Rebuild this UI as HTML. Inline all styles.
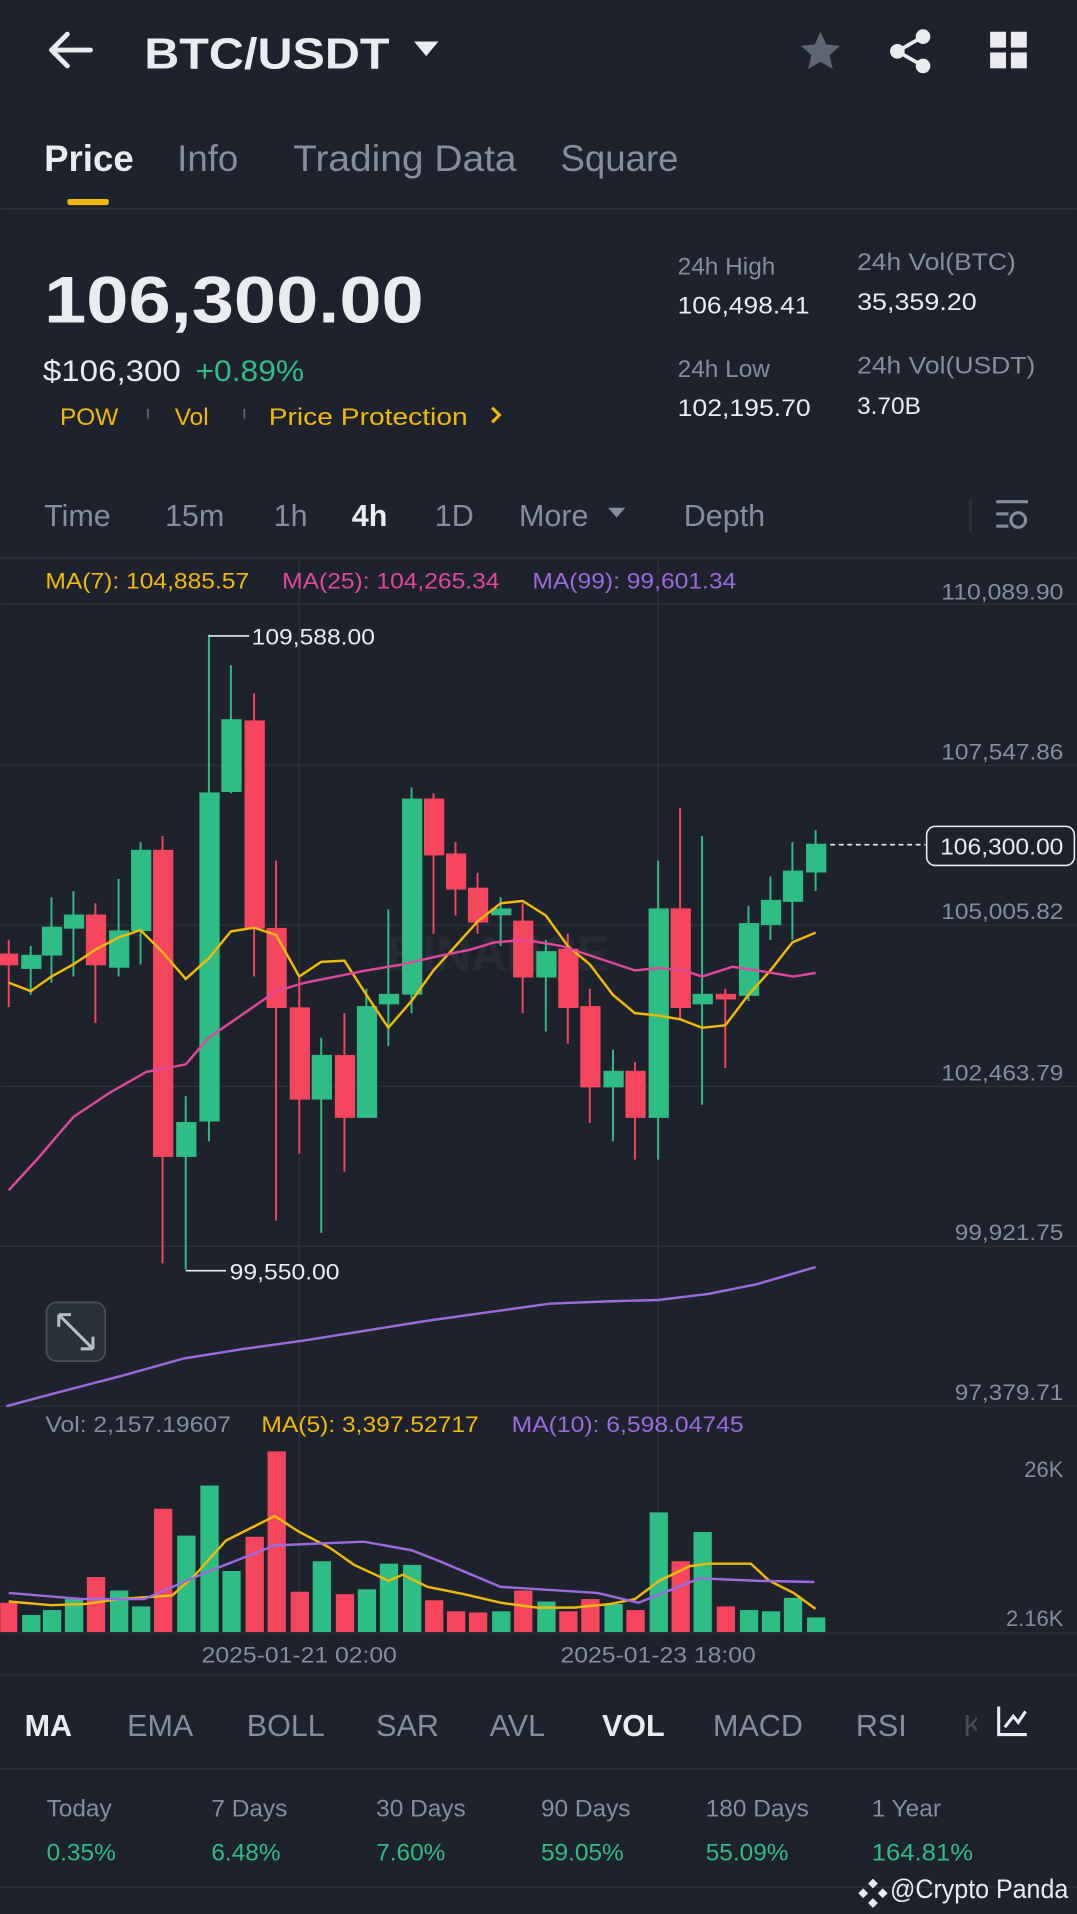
<!DOCTYPE html>
<html><head><meta charset="utf-8"><style>
html,body{margin:0;padding:0;background:#1e222d;}
svg{display:block;}
text{font-family:"Liberation Sans",sans-serif;}
</style></head><body>
<svg width="1077" height="1914" viewBox="0 0 882 1568" xmlns="http://www.w3.org/2000/svg">
<rect width="882" height="1568" fill="#1e222d"/>
<!-- header -->
<path d="M42 41 H74 M42 41 L55 28 M42 41 L55 54" stroke="#eaecef" stroke-width="4" fill="none" stroke-linecap="round" stroke-linejoin="round"/>
<text x="118" y="56" font-size="36" font-weight="bold" fill="#eaecef" textLength="201" lengthAdjust="spacingAndGlyphs">BTC/USDT</text>
<path d="M339 34 H359 L349 46 Z" fill="#eaecef"/>
<path d="M672 26 L676.7 36.5 L688 37.6 L679.5 45.2 L682 56.5 L672 50.6 L662 56.5 L664.5 45.2 L656 37.6 L667.3 36.5 Z" fill="#5e6673"/>
<g fill="#eaecef"><circle cx="756" cy="30" r="6"/><circle cx="735" cy="42" r="6"/><circle cx="756" cy="54" r="6"/></g>
<path d="M756 30 L735 42 L756 54" stroke="#eaecef" stroke-width="3" fill="none"/>
<g fill="#eaecef"><rect x="811" y="26" width="13" height="13"/><rect x="828" y="26" width="13" height="13"/><rect x="811" y="43" width="13" height="13"/><rect x="828" y="43" width="13" height="13"/></g>
<!-- tabs -->
<text x="36" y="140" font-size="30" fill="#eaecef" font-weight="bold">Price</text>
<text x="145" y="140" font-size="30" fill="#848e9c">Info</text>
<text x="240" y="140" font-size="30" fill="#848e9c" textLength="183" lengthAdjust="spacingAndGlyphs">Trading Data</text>
<text x="459" y="140" font-size="30" fill="#848e9c">Square</text>
<rect x="55" y="163" width="34" height="5" rx="2" fill="#f0b90b"/>
<line x1="0" y1="171" x2="882" y2="171" stroke="#2b3139" stroke-width="1.5"/>
<!-- price -->
<text x="36" y="264" font-size="54" font-weight="bold" fill="#eaecef" textLength="311" lengthAdjust="spacingAndGlyphs">106,300.00</text>
<text x="35" y="312" font-size="24" fill="#eaecef" textLength="113" lengthAdjust="spacingAndGlyphs">$106,300</text>
<text x="160" y="312" font-size="24" fill="#2ebd85" textLength="89" lengthAdjust="spacingAndGlyphs">+0.89%</text>
<text x="49" y="348" font-size="20" fill="#f0b90b">POW</text>
<line x1="121" y1="335" x2="121" y2="343" stroke="#5e6673" stroke-width="1.5"/>
<text x="143" y="348" font-size="20" fill="#f0b90b">Vol</text>
<line x1="200" y1="335" x2="200" y2="343" stroke="#5e6673" stroke-width="1.5"/>
<text x="220" y="348" font-size="20" fill="#f0b90b" textLength="163" lengthAdjust="spacingAndGlyphs">Price Protection</text>
<path d="M403 334 L409 340 L403 346" stroke="#f0b90b" stroke-width="2.5" fill="none"/>
<text x="555" y="225" font-size="20" fill="#848e9c">24h High</text>
<text x="555" y="257" font-size="20" fill="#eaecef" textLength="108" lengthAdjust="spacingAndGlyphs">106,498.41</text>
<text x="555" y="309" font-size="20" fill="#848e9c">24h Low</text>
<text x="555" y="341" font-size="20" fill="#eaecef" textLength="109" lengthAdjust="spacingAndGlyphs">102,195.70</text>
<text x="702" y="221" font-size="20" fill="#848e9c" textLength="130" lengthAdjust="spacingAndGlyphs">24h Vol(BTC)</text>
<text x="702" y="254" font-size="20" fill="#eaecef" textLength="98" lengthAdjust="spacingAndGlyphs">35,359.20</text>
<text x="702" y="306" font-size="20" fill="#848e9c" textLength="146" lengthAdjust="spacingAndGlyphs">24h Vol(USDT)</text>
<text x="702" y="339" font-size="20" fill="#eaecef">3.70B</text>
<!-- intervals -->
<g font-size="25" fill="#848e9c">
<text x="36" y="431">Time</text><text x="135" y="431">15m</text><text x="224" y="431">1h</text>
<text x="288" y="431" fill="#eaecef" font-weight="bold">4h</text>
<text x="356" y="431">1D</text><text x="425" y="431">More</text><text x="560" y="431">Depth</text></g>
<path d="M498 416 H512 L505 424 Z" fill="#848e9c"/>
<line x1="795" y1="408" x2="795" y2="436" stroke="#2b3139" stroke-width="2"/>
<g stroke="#848e9c" stroke-width="2.5" fill="none"><line x1="816" y1="411" x2="842" y2="411"/><line x1="816" y1="421" x2="826" y2="421"/><line x1="816" y1="431" x2="826" y2="431"/><circle cx="834" cy="426" r="6"/></g>
<line x1="0" y1="457" x2="882" y2="457" stroke="#2b3139" stroke-width="1.5"/>
<!-- grid -->
<g stroke="#2b3139" stroke-width="1.2">
<line x1="0" y1="495" x2="882" y2="495"/><line x1="0" y1="627" x2="882" y2="627"/><line x1="0" y1="758" x2="882" y2="758"/><line x1="0" y1="890" x2="882" y2="890"/><line x1="0" y1="1021" x2="882" y2="1021"/><line x1="0" y1="1152" x2="882" y2="1152"/>
<line x1="245" y1="457" x2="245" y2="1337"/><line x1="539" y1="457" x2="539" y2="1337"/>
<line x1="0" y1="1338" x2="882" y2="1338"/><line x1="0" y1="1372" x2="882" y2="1372"/><line x1="0" y1="1449" x2="882" y2="1449"/><line x1="0" y1="1546" x2="882" y2="1546"/>
</g>
<g font-size="18">
<text x="37" y="482" fill="#f0b90b" textLength="167" lengthAdjust="spacingAndGlyphs">MA(7): 104,885.57</text>
<text x="231" y="482" fill="#e0489e" textLength="178" lengthAdjust="spacingAndGlyphs">MA(25): 104,265.34</text>
<text x="436" y="482" fill="#9c6ade" textLength="167" lengthAdjust="spacingAndGlyphs">MA(99): 99,601.34</text></g>
<g font-size="18" fill="#848e9c" lengthAdjust="spacingAndGlyphs">
<text x="771" y="491" textLength="100" lengthAdjust="spacingAndGlyphs">110,089.90</text><text x="771" y="622" textLength="100" lengthAdjust="spacingAndGlyphs">107,547.86</text><text x="771" y="753" textLength="100" lengthAdjust="spacingAndGlyphs">105,005.82</text><text x="771" y="885" textLength="100" lengthAdjust="spacingAndGlyphs">102,463.79</text><text x="782" y="1016" textLength="89" lengthAdjust="spacingAndGlyphs">99,921.75</text><text x="782" y="1147" textLength="89" lengthAdjust="spacingAndGlyphs">97,379.71</text></g>
<text x="408" y="795" font-size="40" font-weight="bold" fill="#262b35" text-anchor="middle">BINANCE</text>
<!-- candles -->
<g stroke-width="1.6">
<g stroke="#f6465d" fill="#f6465d">
<line x1="7" y1="770" x2="7" y2="825"/><rect x="0" y="782" width="14" height="8"/>
<line x1="78" y1="740" x2="78" y2="838"/><rect x="71" y="750" width="15" height="40"/>
<line x1="133" y1="685" x2="133" y2="1035"/><rect x="126" y="697" width="15" height="250"/>
<line x1="208" y1="568" x2="208" y2="800"/><rect x="201" y="591" width="15" height="169"/>
<line x1="226" y1="705" x2="226" y2="1000"/><rect x="219" y="761" width="15" height="64"/>
<line x1="245" y1="800" x2="245" y2="945"/><rect x="238" y="826" width="15" height="74"/>
<line x1="282" y1="830" x2="282" y2="960"/><rect x="275" y="865" width="15" height="50"/>
<line x1="355" y1="650" x2="355" y2="765"/><rect x="348" y="655" width="15" height="45"/>
<line x1="373" y1="690" x2="373" y2="750"/><rect x="366" y="700" width="15" height="28"/>
<line x1="391" y1="715" x2="391" y2="765"/><rect x="384" y="728" width="15" height="27"/>
<line x1="428" y1="740" x2="428" y2="830"/><rect x="421" y="755" width="15" height="45"/>
<line x1="465" y1="765" x2="465" y2="855"/><rect x="458" y="778" width="15" height="47"/>
<line x1="483" y1="810" x2="483" y2="920"/><rect x="476" y="825" width="15" height="65"/>
<line x1="520" y1="870" x2="520" y2="950"/><rect x="513" y="878" width="15" height="37"/>
<line x1="557" y1="662" x2="557" y2="835"/><rect x="550" y="745" width="15" height="80"/>
<line x1="594" y1="810" x2="594" y2="875"/><rect x="587" y="815" width="15" height="3"/>
</g>
<g stroke="#2ebd85" fill="#2ebd85">
<line x1="25" y1="775" x2="25" y2="815"/><rect x="18" y="783" width="15" height="10"/>
<line x1="42" y1="735" x2="42" y2="805"/><rect x="35" y="760" width="15" height="22"/>
<line x1="60" y1="730" x2="60" y2="800"/><rect x="53" y="750" width="15" height="10"/>
<line x1="97" y1="720" x2="97" y2="800"/><rect x="90" y="763" width="15" height="29"/>
<line x1="115" y1="690" x2="115" y2="790"/><rect x="108" y="697" width="15" height="65"/>
<line x1="152" y1="898" x2="152" y2="1040"/><rect x="145" y="920" width="15" height="27"/>
<line x1="171" y1="520" x2="171" y2="935"/><rect x="164" y="650" width="15" height="268"/>
<line x1="189" y1="545" x2="189" y2="650"/><rect x="182" y="590" width="15" height="58"/>
<line x1="263" y1="850" x2="263" y2="1010"/><rect x="256" y="865" width="15" height="35"/>
<line x1="300" y1="810" x2="300" y2="905"/><rect x="293" y="825" width="15" height="90"/>
<line x1="318" y1="745" x2="318" y2="857"/><rect x="311" y="815" width="15" height="7"/>
<line x1="337" y1="645" x2="337" y2="830"/><rect x="330" y="655" width="15" height="159"/>
<line x1="410" y1="735" x2="410" y2="775"/><rect x="403" y="745" width="15" height="4"/>
<line x1="447" y1="770" x2="447" y2="845"/><rect x="440" y="780" width="15" height="20"/>
<line x1="502" y1="860" x2="502" y2="935"/><rect x="495" y="878" width="15" height="12"/>
<line x1="539" y1="705" x2="539" y2="950"/><rect x="532" y="745" width="15" height="170"/>
<line x1="575" y1="685" x2="575" y2="905"/><rect x="568" y="815" width="15" height="7"/>
<line x1="613" y1="742" x2="613" y2="820"/><rect x="606" y="757" width="15" height="58"/>
<line x1="631" y1="718" x2="631" y2="770"/><rect x="624" y="738" width="15" height="19"/>
<line x1="649" y1="690" x2="649" y2="770"/><rect x="642" y="714" width="15" height="24"/>
<line x1="668" y1="680" x2="668" y2="730"/><rect x="661" y="692" width="15" height="22"/>
</g></g>
<!-- MA lines -->
<g fill="none" stroke-width="2">
<polyline stroke="#f0b90b" points="7,805 25,812 42,800 60,790 78,778 97,768 115,762 133,780 152,802 171,785 189,763 208,760 226,766 245,800 263,788 282,787 300,815 318,842 337,820 355,795 373,775 391,755 410,740 428,738 447,750 465,775 483,790 502,815 520,830 539,832 557,835 575,842 594,840 613,815 631,795 649,772 668,764"/>
<polyline stroke="#e0489e" points="7,975 30,950 60,915 90,895 120,878 152,872 171,850 200,830 226,812 250,805 275,800 300,795 330,790 360,783 385,778 405,772 430,770 460,775 490,785 520,795 539,793 560,795 575,800 600,792 620,795 650,800 668,797"/>
<polyline stroke="#9c6ade" points="5,1152 50,1140 100,1127 150,1113 200,1105 250,1098 300,1090 350,1082 400,1075 450,1068 500,1066 539,1065 580,1060 620,1052 668,1038"/>
</g>
<!-- annotations -->
<path d="M171 521 H204" stroke="#eaecef" stroke-width="1.3"/>
<text x="206" y="528" font-size="18" fill="#eaecef" textLength="101" lengthAdjust="spacingAndGlyphs">109,588.00</text>
<path d="M152 1041 H185" stroke="#eaecef" stroke-width="1.3"/>
<text x="188" y="1048" font-size="18" fill="#eaecef" textLength="90" lengthAdjust="spacingAndGlyphs">99,550.00</text>
<line x1="680" y1="692" x2="758" y2="692" stroke="#eaecef" stroke-width="1.3" stroke-dasharray="4,3"/>
<rect x="759" y="677" width="121" height="32" rx="7" fill="#1e222d" stroke="#eaecef" stroke-width="1.3"/>
<text x="770" y="700" font-size="19" fill="#eaecef" textLength="101" lengthAdjust="spacingAndGlyphs">106,300.00</text>
<rect x="38" y="1067" width="48" height="48" rx="8" fill="#2b3139" stroke="#474d57" stroke-width="1.5"/>
<g stroke="#b7bdc6" stroke-width="2.5" fill="none"><path d="M48 1077 L76 1105 M48 1077 V1087 M48 1077 H58 M76 1105 V1095 M76 1105 H66"/></g>
<!-- volume -->
<text x="37" y="1173" font-size="18" fill="#848e9c" textLength="152" lengthAdjust="spacingAndGlyphs">Vol: 2,157.19607</text>
<text x="214" y="1173" font-size="18" fill="#f0b90b" textLength="178" lengthAdjust="spacingAndGlyphs">MA(5): 3,397.52717</text>
<text x="419" y="1173" font-size="18" fill="#9c6ade" textLength="190" lengthAdjust="spacingAndGlyphs">MA(10): 6,598.04745</text>
<text x="871" y="1210" font-size="18" fill="#848e9c" text-anchor="end">26K</text>
<text x="871" y="1332" font-size="18" fill="#848e9c" text-anchor="end">2.16K</text>
<g fill="#f6465d">
<rect x="0" y="1313" width="14" height="24"/><rect x="71" y="1292" width="15" height="45"/><rect x="126" y="1236" width="15" height="101"/><rect x="201" y="1259" width="15" height="78"/><rect x="219" y="1189" width="15" height="148"/><rect x="238" y="1304" width="15" height="33"/><rect x="275" y="1306" width="15" height="31"/><rect x="348" y="1311" width="15" height="26"/><rect x="366" y="1320" width="15" height="17"/><rect x="384" y="1321" width="15" height="16"/><rect x="421" y="1303" width="15" height="34"/><rect x="458" y="1320" width="15" height="17"/><rect x="476" y="1310" width="15" height="27"/><rect x="513" y="1319" width="15" height="18"/><rect x="550" y="1279" width="15" height="58"/><rect x="587" y="1316" width="15" height="21"/></g>
<g fill="#2ebd85">
<rect x="18" y="1323" width="15" height="14"/><rect x="35" y="1319" width="15" height="18"/><rect x="53" y="1310" width="15" height="27"/><rect x="90" y="1303" width="15" height="34"/><rect x="108" y="1316" width="15" height="21"/><rect x="145" y="1258" width="15" height="79"/><rect x="164" y="1217" width="15" height="120"/><rect x="182" y="1287" width="15" height="50"/><rect x="256" y="1279" width="15" height="58"/><rect x="293" y="1302" width="15" height="35"/><rect x="311" y="1281" width="15" height="56"/><rect x="330" y="1282" width="15" height="55"/><rect x="403" y="1320" width="15" height="17"/><rect x="440" y="1312" width="15" height="25"/><rect x="495" y="1314" width="15" height="23"/><rect x="532" y="1239" width="15" height="98"/><rect x="568" y="1255" width="15" height="82"/><rect x="606" y="1319" width="15" height="18"/><rect x="624" y="1320" width="15" height="17"/><rect x="642" y="1309" width="15" height="28"/><rect x="661" y="1325" width="15" height="12"/></g>
<g fill="none" stroke-width="2">
<polyline stroke="#f0b90b" points="7,1312 42,1315 70,1314 97,1310 141,1307 160,1290 185,1262 205,1252 225,1242 245,1255 270,1268 290,1282 318,1295 330,1290 350,1300 380,1306 410,1313 440,1317 470,1317 500,1314 520,1310 540,1295 565,1283 580,1281 615,1281 630,1295 650,1305 668,1318"/>
<polyline stroke="#9c6ade" points="7,1305 67,1310 118,1310 169,1288 225,1266 298,1263 337,1270 360,1279 410,1300 489,1305 523,1313 573,1293 619,1295 667,1296"/>
</g>
<text x="165" y="1362" font-size="18" fill="#848e9c" textLength="160" lengthAdjust="spacingAndGlyphs">2025-01-21 02:00</text>
<text x="459" y="1362" font-size="18" fill="#848e9c" textLength="160" lengthAdjust="spacingAndGlyphs">2025-01-23 18:00</text>
<!-- indicators -->
<g font-size="25" fill="#848e9c">
<text x="20" y="1422" fill="#eaecef" font-weight="bold">MA</text><text x="104" y="1422">EMA</text><text x="202" y="1422">BOLL</text><text x="308" y="1422">SAR</text><text x="401" y="1422">AVL</text><text x="493" y="1422" fill="#eaecef" font-weight="bold">VOL</text><text x="584" y="1422">MACD</text><text x="701" y="1422">RSI</text><text x="789" y="1422" fill="#474d57">K</text></g>
<rect x="800" y="1390" width="82" height="45" fill="#1e222d"/>
<g stroke="#eaecef" stroke-width="2.5" fill="none"><path d="M818 1398 V1421 H841"/><path d="M823 1415 L830 1406 L834 1411 L840 1402"/></g>
<g font-size="20" fill="#848e9c">
<text x="38" y="1488">Today</text><text x="173" y="1488">7 Days</text><text x="308" y="1488">30 Days</text><text x="443" y="1488">90 Days</text><text x="578" y="1488">180 Days</text><text x="714" y="1488">1 Year</text></g>
<g font-size="20" fill="#2ebd85">
<text x="38" y="1524">0.35%</text><text x="173" y="1524">6.48%</text><text x="308" y="1524">7.60%</text><text x="443" y="1524">59.05%</text><text x="578" y="1524">55.09%</text><text x="714" y="1524" textLength="83" lengthAdjust="spacingAndGlyphs">164.81%</text></g>
<g fill="#eaecef"><path d="M715 1539 l4 4 l-4 4 l-4 -4 Z"/><path d="M707 1547 l4 4 l-4 4 l-4 -4 Z"/><path d="M723 1547 l4 4 l-4 4 l-4 -4 Z"/><path d="M715 1555 l4 4 l-4 4 l-4 -4 Z"/></g>
<text x="729" y="1555" font-size="22" fill="#eaecef" textLength="146" lengthAdjust="spacingAndGlyphs">@Crypto Panda</text>
</svg>
</body></html>
